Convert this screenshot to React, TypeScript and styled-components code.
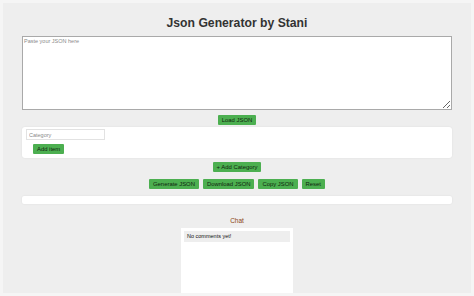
import styled, { createGlobalStyle } from "styled-components";

const GlobalStyle = createGlobalStyle`
  html, body {
    margin: 0;
    padding: 0;
    background: #f5f5f5;
    font-family: "Liberation Sans", Arial, sans-serif;
  }
`

const Page = styled.div`
  margin: 3px 3px 0 3px;
  height: 290px;
  background: #eeeeee;
  padding: 0 19px;
  box-sizing: border-box;
  display: flex;
  flex-direction: column;
  align-items: center;
  & > * {
    flex-shrink: 0;
  }
`

const Title = styled.h1`
  margin: 12px 0 0;
  font-size: 12.2px;
  line-height: 17px;
  font-weight: 700;
  color: #333333;
`

const JsonInput = styled.textarea`
  margin-top: 4px;
  width: 100%;
  height: 74px;
  box-sizing: border-box;
  border: 1px solid #a9a9a9;
  background: #ffffff;
  padding: 1px;
  font-family: "Liberation Sans", Arial, sans-serif;
  font-size: 5.5px;
  &::placeholder {
    color: #8a8a8a;
  }
`

const Button = styled.button<{ $mt?: number }>`
  margin-top: ${p => p.$mt ?? 0}px;
  background: #4caf50;
  color: #0f1f0f;
  border: none;
  border-radius: 1px;
  padding: 0 4px;
  height: 10px;
  font-family: "Liberation Sans", Arial, sans-serif;
  font-size: 5.9px;
  line-height: 10px;
  cursor: pointer;
`

const CategoryCard = styled.div`
  margin-top: 2px;
  width: 100%;
  height: 31px;
  box-sizing: border-box;
  background: #ffffff;
  border-radius: 3px;
  box-shadow: 0 0 2px rgba(0, 0, 0, 0.08);
  padding: 2px 4px;
  display: flex;
  flex-direction: column;
  align-items: flex-start;
`

const CategoryInput = styled.input`
  width: 79px;
  height: 11px;
  box-sizing: border-box;
  border: 1px solid #e2e2e2;
  padding: 0 2px;
  font-family: "Liberation Sans", Arial, sans-serif;
  font-size: 5.5px;
  &::placeholder {
    color: #8a8a8a;
  }
`

const ItemButton = styled(Button)`
  margin: 4px 0 0 7px;
`

const ActionRow = styled.div`
  margin-top: 7px;
  display: flex;
  gap: 4px;
`

const Output = styled.div`
  margin-top: 7px;
  width: 100%;
  height: 8px;
  background: #ffffff;
  border-radius: 2px;
  box-shadow: 0 0 2px rgba(0, 0, 0, 0.08);
`

const ChatTitle = styled.div`
  margin-top: 12px;
  font-size: 6.5px;
  line-height: 9px;
  color: #8b4513;
`

const ChatBox = styled.div`
  margin-top: 3px;
  width: 112px;
  height: 72px;
  background: #ffffff;
  padding: 3px;
  box-sizing: border-box;
`

const Comment = styled.div`
  background: #eeeeee;
  height: 11px;
  padding: 0 3px;
  font-size: 5.5px;
  line-height: 11px;
  color: #111111;
`

function App() {
  return (
    <>
      <GlobalStyle />
      <Page>
        <Title>Json Generator by Stani</Title>
        <JsonInput placeholder="Paste your JSON here" />
        <Button $mt={5}>Load JSON</Button>
        <CategoryCard>
          <CategoryInput placeholder="Category" />
          <ItemButton>Add item</ItemButton>
        </CategoryCard>
        <Button $mt={4}>+ Add Category</Button>
        <ActionRow>
          <Button>Generate JSON</Button>
          <Button>Download JSON</Button>
          <Button>Copy JSON</Button>
          <Button>Reset</Button>
        </ActionRow>
        <Output />
        <ChatTitle>Chat</ChatTitle>
        <ChatBox>
          <Comment>No comments yet!</Comment>
        </ChatBox>
      </Page>
    </>
  )
}

export default App
